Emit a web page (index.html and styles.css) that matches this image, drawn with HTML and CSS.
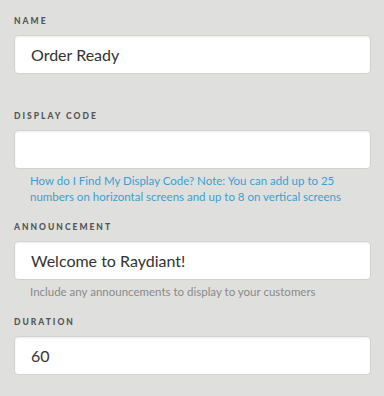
FILE: index.html
```html
<!DOCTYPE html>
<html lang="en">

<head>
    <meta charset="UTF-8">
    <title>Order Ready</title>
    <link rel="stylesheet" href="styles.css">
</head>

<body>
    <div class="form">
        <div class="field">
            <label class="label">Name</label>
            <div class="input">Order Ready</div>
            <div class="help"></div>
        </div>
        <div class="field">
            <label class="label">Display Code</label>
            <div class="input"></div>
            <div class="help help-link">How do I Find My Display Code? Note: You can add up to 25 numbers on horizontal screens and up to 8 on vertical screens</div>
        </div>
        <div class="field">
            <label class="label">Announcement</label>
            <div class="input">Welcome to Raydiant!</div>
            <div class="help">Include any announcements to display to your customers</div>
        </div>
        <div class="field">
            <label class="label">Duration</label>
            <div class="input">60</div>
        </div>
    </div>
</body>

</html>
```

FILE: styles.css
```css
* {
    box-sizing: border-box;
}

body {
    margin: 0;
    background: #dfdfdd;
    font-family: Lato, "Noto Sans", sans-serif;
}

.form {
    padding: 15px 13px 0 14px;
    display: flex;
    flex-direction: column;
}

.field {
    display: flex;
    flex-direction: column;
    margin-bottom: 16px;
}

.label {
    display: block;
    height: 12px;
    line-height: 12px;
    margin-bottom: 8px;
    font-size: 8.5px;
    font-weight: 900;
    letter-spacing: 2px;
    text-transform: uppercase;
    color: #555;
}

.input {
    height: 39px;
    line-height: 37px;
    padding: 0 16px;
    background: #fff;
    border: 1px solid #d2d2d0;
    border-radius: 4px;
    box-shadow: inset 0 1px 2px rgba(0, 0, 0, 0.08);
    font-size: 16px;
    color: #333;
}

.help {
    min-height: 16px;
    margin-top: 4px;
    padding: 0 16px;
    font-size: 11.5px;
    line-height: 16px;
    color: #8a8a8a;
}

.help-link {
    color: #3a9fd2;
}
```
